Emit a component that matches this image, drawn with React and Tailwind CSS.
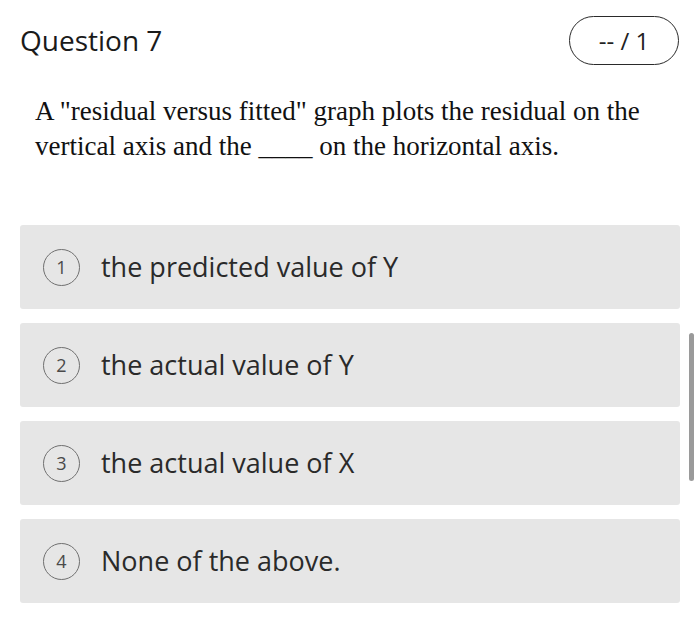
import React from "react";

const options = [
  { n: 1, t: "the predicted value of Y" },
  { n: 2, t: "the actual value of Y" },
  { n: 3, t: "the actual value of X" },
  { n: 4, t: "None of the above." },
];

export default function App() {
  return (
    <div className="relative w-[700px] h-[617px] bg-white overflow-hidden font-['Open_Sans',sans-serif] text-[#222]">
      <div className="flex items-center justify-between pl-[20px] pr-[21px] pt-[16px]">
        <div className="text-[28px] leading-[49px] text-[#1a1a1a]">Question 7</div>
        <div className="w-[110px] h-[49px] rounded-full border-[1.5px] border-[#2a2a2a] flex items-center justify-center text-[24px] text-[#222]">
          -- / 1
        </div>
      </div>
      <div className="pl-[35px] pr-[30px] pt-[29px] font-['Liberation_Serif',serif] text-[27px] leading-[35px] text-[#111]">
        A "residual versus fitted" graph plots the residual on the vertical axis and the ____ on the horizontal axis.
      </div>
      <div className="flex flex-col gap-[14px] px-[20px] pt-[61px]">
        {options.map((o) => (
          <div key={o.n} className="h-[84px] rounded-[3px] bg-[#e6e6e6] flex items-center pl-[23px]">
            <div className="w-[37px] h-[37px] rounded-full border-[1.5px] border-[#707070] flex items-center justify-center text-[18px] text-[#4a4a4a]">
              {o.n}
            </div>
            <div className="ml-[21px] text-[27px] text-[#2a2a2a]">{o.t}</div>
          </div>
        ))}
      </div>
      <div className="absolute left-[689px] top-[333px] w-[5px] h-[148px] rounded-full bg-[#9a9a9a]" />
    </div>
  );
}
